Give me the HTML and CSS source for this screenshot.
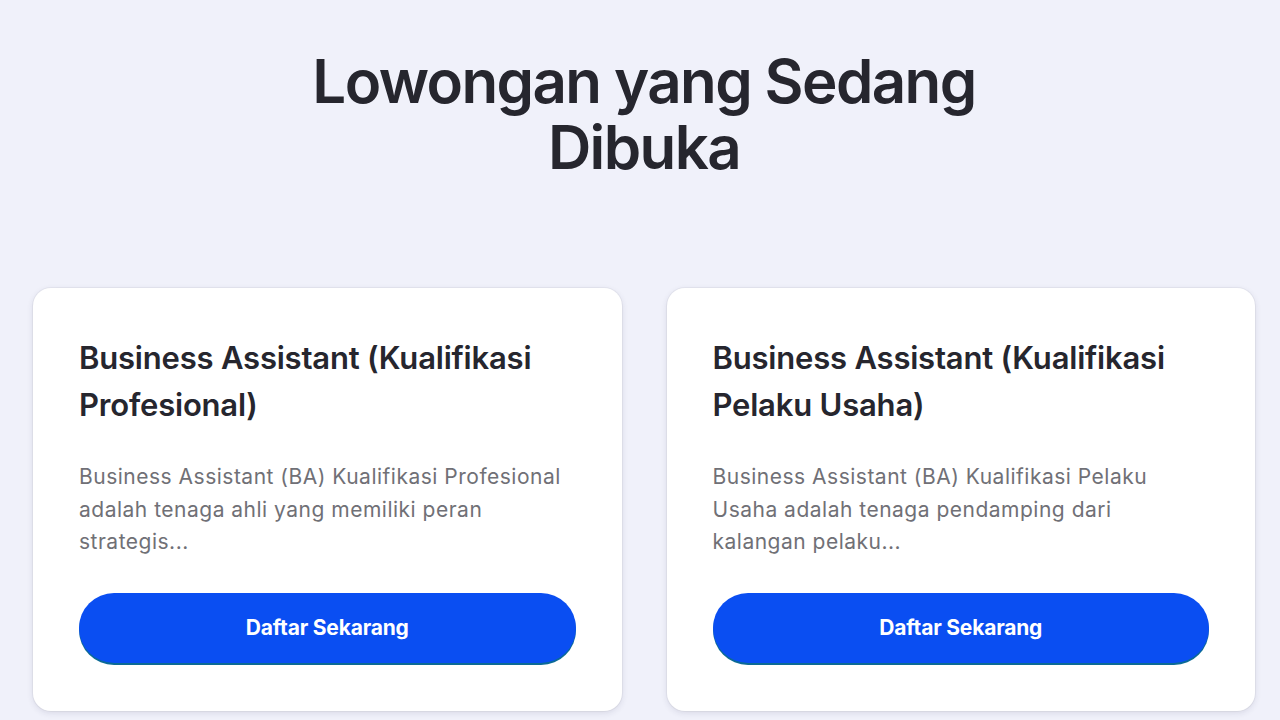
FILE: index.html
```html
<!DOCTYPE html>
<html lang="id">
<head>
    <meta charset="UTF-8">
    <meta name="viewport" content="width=device-width, initial-scale=1.0">
    <title>Lowongan yang Sedang Dibuka</title>
    <link rel="stylesheet" href="styles.css">
</head>
<body>
    <section class="jobs">
        <h1 class="jobs-title">Lowongan yang Sedang<br>Dibuka</h1>

        <div class="job-list">
            <div class="job-card">
                <h3 class="job-name">Business Assistant (Kualifikasi Profesional)</h3>
                <p class="job-desc">Business Assistant (BA) Kualifikasi Profesional adalah tenaga ahli yang memiliki peran strategis...</p>
                <button class="apply-button">Daftar Sekarang</button>
            </div>
            <div class="job-card">
                <h3 class="job-name">Business Assistant (Kualifikasi Pelaku Usaha)</h3>
                <p class="job-desc">Business Assistant (BA) Kualifikasi Pelaku Usaha adalah tenaga pendamping dari kalangan pelaku...</p>
                <button class="apply-button">Daftar Sekarang</button>
            </div>
        </div>
    </section>
</body>
</html>
```

FILE: styles.css
```css
* {
    margin: 0;
    padding: 0;
    box-sizing: border-box;
    font-family: 'Inter', 'Noto Sans', sans-serif;
}

:root {
    --bg: #f0f1fa;
    --text: #26262e;
    --muted: #707076;
    --primary: #0a4ef2;
}

body {
    background: var(--bg);
    color: var(--text);
    overflow: hidden;
    height: 100vh;
}

.jobs {
    padding: 48px 25px 0 33px;
}

.jobs-title {
    font-size: 60px;
    font-weight: 600;
    line-height: 66px;
    letter-spacing: -1.6px;
    text-align: center;
    margin-bottom: 108px;
}

.job-list {
    display: grid;
    grid-template-columns: 1fr 1fr;
    gap: 45px;
}

.job-card {
    background: #fff;
    border-radius: 18px;
    padding: 46px 46px 48px;
    box-shadow: 0 0 0 1px rgba(0, 0, 0, 0.04), 0 2px 6px rgba(40, 40, 80, 0.12);
    display: flex;
    flex-direction: column;
}

.job-name {
    font-size: 31px;
    font-weight: 600;
    line-height: 47px;
    letter-spacing: -0.2px;
    margin-bottom: 33px;
}

.job-desc {
    font-size: 21px;
    line-height: 32.5px;
    letter-spacing: 0.5px;
    color: var(--muted);
    margin-bottom: 34px;
}

.apply-button {
    width: 100%;
    height: 70px;
    border: none;
    border-radius: 35px;
    background: var(--primary);
    color: #fff;
    font-size: 21px;
    font-weight: 700;
    letter-spacing: -0.2px;
    box-shadow: 0 2px 0 #0b6a96;
    cursor: pointer;
}
```
